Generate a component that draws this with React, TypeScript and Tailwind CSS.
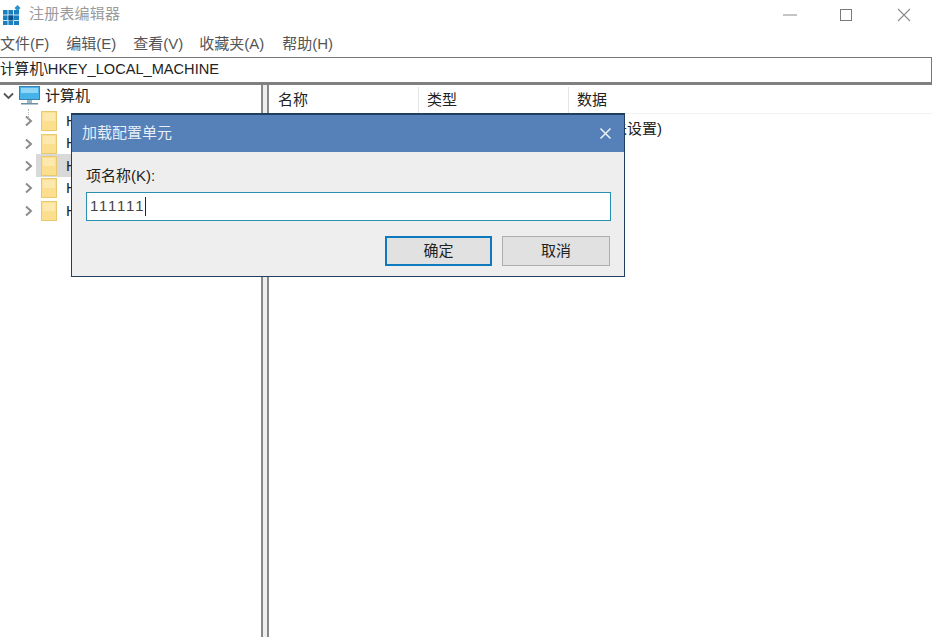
const cjk = "font-['Liberation_Sans','Noto_Sans_CJK_SC',sans-serif]";

function AppIcon() {
  return (
    <svg width="21" height="21" viewBox="0 0 21 21" className="shrink-0">
      <rect x="2" y="6" width="16" height="16" fill="#1a7fbe" />
      <path d="M2 11h16M2 16.5h16M7 6v16M12.5 6v16" stroke="#cfe6f4" strokeWidth="1" />
      <rect x="7.5" y="11.5" width="5" height="5" fill="#0d4f8a" />
      <path d="M16.5 1l3 3-3 3-3-3z" fill="#2a93c9" />
    </svg>
  );
}

function Computer() {
  return (
    <svg width="22" height="22" viewBox="0 0 22 22" className="shrink-0">
      <rect x="0.5" y="1.5" width="20" height="13" fill="#45b2ea" stroke="#3d7fae" />
      <rect x="2" y="3" width="17" height="5" fill="#8fd6f6" />
      <rect x="8" y="15" width="5" height="3" fill="#9fb6c4" />
      <rect x="2" y="18" width="17" height="1.5" fill="#6d8da1" />
    </svg>
  );
}

function Folder() {
  return (
    <svg width="16" height="20" viewBox="0 0 16 20" className="shrink-0">
      <rect x="0.5" y="0.5" width="15" height="19" fill="#fbdf8f" stroke="#e9c970" />
      <rect x="2" y="2" width="12" height="8" fill="#fde9ae" />
    </svg>
  );
}

function Chevron() {
  return (
    <svg width="9" height="12" viewBox="0 0 9 12" className="shrink-0">
      <path d="M2 1.5l5 4.5-5 4.5" fill="none" stroke="#8c8c8c" strokeWidth="2" />
    </svg>
  );
}

function TreeRow({ selected }: { selected?: boolean }) {
  return (
    <div className="h-[22.4px] flex items-center">
      <div className="w-9 flex pl-[24px]">
        <Chevron />
      </div>
      <div className={`flex items-center h-[23px] w-[60px] gap-[9px] pl-[5px] ${selected ? "bg-[#d9d9d9]" : ""}`}>
        <Folder />
        <span className="text-[15px] text-[#222]">H</span>
      </div>
    </div>
  );
}

function Dialog() {
  return (
    <div className="absolute left-[71px] top-[113px] w-[554px] h-[164px] border border-[#1f3f60] border-t-2 bg-[#eeeeee] flex flex-col">
      <div className="h-[37px] bg-[#5580b8] flex items-center justify-between pl-[10px] pr-[12px] shrink-0">
        <span className="text-[15px] text-[#e8eef6]">加载配置单元</span>
        <svg width="13" height="13" viewBox="0 0 13 13">
          <path d="M1.5 1.5l10 10M11.5 1.5l-10 10" stroke="#eef3f9" strokeWidth="1.5" />
        </svg>
      </div>
      <div className="flex-1 flex flex-col px-[14px]">
        <div className="text-[15px] text-[#222] mt-[14px] leading-[20px]">项名称(K):</div>
        <div className="mt-[6px] h-[29px] w-[525px] border border-[#2a8fb0] bg-white flex items-center pl-[3px] text-[15px] text-[#444] tracking-[1.8px]">
          111111<span className="w-px h-[19px] bg-[#222]" />
        </div>
        <div className="mt-[15px] w-[525px] flex justify-end gap-[10px] pr-[1px]">
          <div className="w-[107px] h-[30px] border-2 border-[#0f79bd] bg-[#e1e1e1] flex items-center justify-center text-[15px] text-[#222]">确定</div>
          <div className="w-[108px] h-[30px] border border-[#adadad] bg-[#e1e1e1] flex items-center justify-center text-[15px] text-[#222]">取消</div>
        </div>
      </div>
    </div>
  );
}

export default function App() {
  return (
    <div className={`relative w-[932px] h-[637px] overflow-hidden bg-white flex flex-col ${cjk}`}>
      <div className="h-[29px] flex items-center pl-[1px] shrink-0">
        <AppIcon />
        <span className="ml-[7px] text-[15px] text-[#9a9a9a] tracking-[0.2px]">注册表编辑器</span>
        <div className="ml-auto flex items-center">
          <svg width="14" height="2" viewBox="0 0 14 2" className="mr-[43px]">
            <rect width="14" height="1" y="0.5" fill="#8a8a8a" />
          </svg>
          <div className="w-[12px] h-[12px] border border-[#7a7a7a] mr-[45px]" />
          <svg width="14" height="14" viewBox="0 0 14 14" className="mr-[21px]">
            <path d="M1 1l12 12M13 1L1 13" stroke="#8a8a8a" strokeWidth="1.1" />
          </svg>
        </div>
      </div>

      <div className="h-[28px] pt-[2px] flex items-center text-[15px] text-[#555] shrink-0">
        <span>文件(F)</span>
        <span className="ml-[17px]">编辑(E)</span>
        <span className="ml-[17px]">查看(V)</span>
        <span className="ml-[16px]">收藏夹(A)</span>
        <span className="ml-[18px]">帮助(H)</span>
      </div>

      <div className="h-[28px] border-t border-t-[#777] border-b-[3px] border-b-[#808080] border-r border-r-[#777] flex items-center text-[14.6px] text-[#222] shrink-0 box-border">
        计算机\HKEY_LOCAL_MACHINE
      </div>

      <div className="flex-1 flex min-h-0">
        <div className="relative w-[261px] shrink-0">
          <div className="h-[22px] flex items-center pl-[3px]">
            <svg width="11" height="8" viewBox="0 0 11 8" className="shrink-0">
              <path d="M1 1.5l4.5 4.5L10 1.5" fill="none" stroke="#555" strokeWidth="1.8" />
            </svg>
            <span className="ml-[5px]"><Computer /></span>
            <span className="ml-[4px] text-[15px] text-[#222]">计算机</span>
          </div>
          <div className="pt-[3px]">
            <TreeRow />
            <TreeRow />
            <TreeRow selected />
            <TreeRow />
            <TreeRow />
          </div>
          <div className="absolute left-[28px] top-[24px] h-[10px] border-l border-dotted border-[#b5b5b5]" />
        </div>

        <div className="w-[8px] shrink-0 bg-[#eeeeee] border-x-2 border-x-[#888]" />

        <div className="flex-1 min-w-0">
          <div className="h-[29px] pt-[2px] flex items-center text-[15px] text-[#222] border-b border-[#f2f2f2]">
            <div className="w-[150px] h-full flex items-center pl-[9px] border-r border-[#e5e5e5]">名称</div>
            <div className="w-[150px] h-full flex items-center pl-[8px] border-r border-[#e5e5e5]">类型</div>
            <div className="pl-[8px]">数据</div>
          </div>
          <div className="h-[31px] flex items-center text-[15px] text-[#222] pl-[300px] indent-[8px]">(数值未设置)</div>
        </div>
      </div>

      <Dialog />
    </div>
  );
}
